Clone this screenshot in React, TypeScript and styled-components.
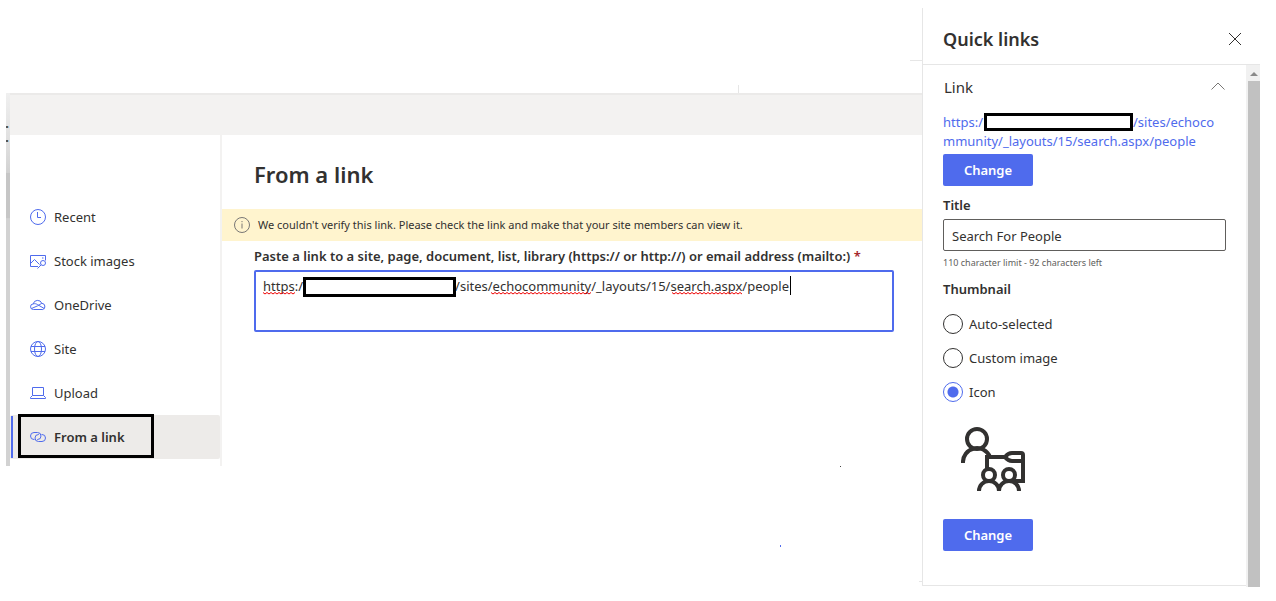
import React, { useState } from "react";
import styled, { createGlobalStyle } from "styled-components";

const blue = "#4f6bed";
const ink = "#323130";

const Global = createGlobalStyle`
  *, *::before, *::after { box-sizing: border-box; }
  body { margin: 0; background: #fff; color: ${ink}; font-family: "Noto Sans", "Open Sans", sans-serif; font-size: 13px; line-height: 20px; }
  button, input, textarea { font: inherit; color: inherit; }
  h1, h2, h3, p, ul, fieldset { margin: 0; padding: 0; border: 0; list-style: none; }
`;

const Page = styled.div`
  display: flex;
  align-items: flex-start;
  padding: 8px 16px 14px 6px;
`;

const Stage = styled.div`
  position: relative;
  flex: 1;
  min-width: 0;
  align-self: stretch;
  padding-top: 85px;
`;

const Tick = styled.i<{ $w: number; $h: number; $top: number; $right: number; $color?: string }>`
  position: absolute;
  width: ${(p) => p.$w}px;
  height: ${(p) => p.$h}px;
  top: ${(p) => p.$top}px;
  right: ${(p) => p.$right}px;
  background: ${(p) => p.$color ?? "#e6e6e6"};
`;

const Fragment = styled.i<{ $top: number }>`
  position: absolute;
  left: 0;
  top: ${(p) => p.$top}px;
  width: 3px;
  height: 2px;
  background: linear-gradient(90deg, #555 0 2px, #9cc8e4 2px);
`;

const Picker = styled.main`
  border-left: 4px solid #d2d2d2;
  border-image: linear-gradient(#f0f0f0 0, #dcdcdc 60px, #d2d2d2 80px, #c6c6c6 81px, #c6c6c6 125px, #d2d2d2 126px) 1;
  border-image-width: 0 0 0 4px;
`;

const TopBand = styled.div`
  height: 42px;
  background: #f3f2f1;
  border-top: 2px solid #ebeae9;
`;

const PickerBody = styled.div`
  display: flex;
  min-height: 331px;
`;

const Nav = styled.nav`
  width: 212px;
  flex: none;
  padding-top: 60px;
  border-right: 2px solid #f3f2f1;
`;

const NavItem = styled.button<{ $active?: boolean }>`
  position: relative;
  display: flex;
  align-items: center;
  gap: 8px;
  width: 100%;
  height: 44px;
  padding: 0 20px;
  border: 0;
  border-radius: 2px;
  background: ${(p) => (p.$active ? "#edebe9" : "transparent")};
  font-weight: ${(p) => (p.$active ? 600 : 400)};
  text-align: left;
  svg { flex: none; color: ${blue}; }
  &::before {
    content: "";
    display: ${(p) => (p.$active ? "block" : "none")};
    position: absolute;
    left: 1px;
    top: 1px;
    bottom: 1px;
    width: 2px;
    background: ${blue};
  }
  &::after {
    content: "";
    display: ${(p) => (p.$active ? "block" : "none")};
    position: absolute;
    left: 8px;
    top: -1px;
    width: 136px;
    height: 44px;
    border: 3px solid #000;
  }
`;

const Content = styled.section`
  flex: 1;
  min-width: 0;
`;

const Heading = styled.h1`
  padding: 23px 32px 19px;
  font-size: 22px;
  line-height: 32px;
  font-weight: 600;
`;

const Warning = styled.p`
  display: flex;
  align-items: center;
  gap: 8px;
  height: 32px;
  padding: 0 12px;
  background: #fff4ce;
  font-size: 11px;
  svg { flex: none; color: #797775; }
`;

const LinkForm = styled.div`
  padding: 5px 28px 0 32px;
`;

const Label = styled.label`
  display: block;
  font-weight: 600;
`;

const Required = styled.span`
  color: #a4262c;
`;

const LinkBox = styled.div`
  position: relative;
  margin-top: 4px;
`;

const LinkInput = styled.textarea`
  display: block;
  width: 100%;
  height: 62px;
  padding: 4px 7px;
  border: 2px solid ${blue};
  border-radius: 2px;
  background: #fff;
  outline: 0;
  resize: none;
`;

const Redaction = styled.span<{ $left: number; $top: number; $w: number; $h: number }>`
  position: absolute;
  left: ${(p) => p.$left}px;
  top: ${(p) => p.$top}px;
  width: ${(p) => p.$w}px;
  height: ${(p) => p.$h}px;
  border: 3px solid #000;
  background: #fff;
`;

const Squiggle = styled.svg<{ $left: number }>`
  position: absolute;
  left: ${(p) => p.$left}px;
  top: 22px;
`;

const Caret = styled.span`
  position: absolute;
  left: 536px;
  top: 6px;
  width: 1px;
  height: 19px;
  background: #000;
`;

const Panel = styled.aside`
  width: 338px;
  flex: none;
  border-left: 1px solid #e6e6e6;
`;

const PanelHeader = styled.header`
  display: flex;
  align-items: center;
  justify-content: space-between;
  height: 57px;
  padding: 6px 12px 0 20px;
  border-bottom: 1px solid #e6e6e6;
`;

const PanelTitle = styled.h2`
  font-size: 18px;
  line-height: 28px;
  font-weight: 600;
`;

const IconButton = styled.button`
  display: grid;
  place-items: center;
  width: 26px;
  height: 26px;
  padding: 0;
  border: 0;
  background: transparent;
  svg { display: block; }
`;

const PanelScroll = styled.div`
  display: flex;
`;

const PanelBody = styled.div`
  flex: 1;
  min-width: 0;
  padding: 8px 20px 34px;
  border-bottom: 1px solid #e6e6e6;
`;

const ScrollTrack = styled.div`
  width: 14px;
  flex: none;
  display: flex;
  flex-direction: column;
  align-items: flex-end;
  background: #f1f1f1;
  margin-bottom: -1px;
`;

const ScrollArrow = styled.svg`
  flex: none;
  width: 12px;
  height: 16px;
`;

const ScrollThumb = styled.div`
  flex: 1;
  width: 12px;
  background: #c1c1c1;
`;

const GroupToggle = styled.button`
  display: flex;
  align-items: center;
  justify-content: space-between;
  width: 100%;
  height: 28px;
  padding: 0 1px;
  border: 0;
  background: transparent;
  font-size: 15px;
  margin-bottom: 12px;
`;

const PanelLink = styled.a`
  position: relative;
  display: block;
  margin-bottom: 3px;
  color: ${blue};
  line-height: 19px;
  text-decoration: none;
  white-space: nowrap;
`;

const HostGap = styled.span`
  display: inline-block;
  width: 150px;
`;

const PrimaryButton = styled.button`
  display: block;
  width: 90px;
  height: 32px;
  padding: 0;
  border: 0;
  border-radius: 2px;
  background: ${blue};
  color: #fff;
  font-weight: 600;
`;

const TitleField = styled.div`
  padding-top: 9px;
`;

const TextInput = styled.input`
  display: block;
  width: 100%;
  height: 32px;
  margin-top: 4px;
  padding: 2px 8px 0;
  border: 1px solid #605e5c;
  border-radius: 2px;
  background: #fff;
`;

const Hint = styled.p`
  padding-top: 4px;
  font-size: 9px;
  line-height: 16px;
  color: #605e5c;
`;

const Choices = styled.fieldset`
  min-width: 0;
  padding-top: 8px;
`;

const Legend = styled.legend`
  float: left;
  width: 100%;
  padding: 0;
  margin-bottom: 8px;
  font-weight: 600;
`;

const Choice = styled.label`
  clear: both;
  display: flex;
  align-items: center;
  gap: 6px;
  height: 34px;
`;

const Radio = styled.input`
  appearance: none;
  width: 20px;
  height: 20px;
  margin: 0;
  border: 1px solid ${ink};
  border-radius: 50%;
  background: #fff;
  &:checked {
    border-color: ${blue};
    background: radial-gradient(circle, ${blue} 5px, #fff 6px);
  }
`;

const Thumbnail = styled.div`
  padding: 18px 18px 28px;
  svg { display: block; }
`;

const navIcons: Record<string, React.ReactNode> = {
  Recent: (
    <>
      <circle cx="8" cy="8" r="7.5" />
      <path d="M7.5 3v5.5H11" />
    </>
  ),
  "Stock images": (
    <>
      <path d="M8 13.5H.5v-11h15v5M.5 10.5l4-4 5 5M12 5h1.500" />
      <circle cx="13" cy="10" r="2.5" />
      <path d="M11.200 11.800 7.500 15.500" />
    </>
  ),
  OneDrive: (
    <>
      <path d="M3.5 12.5a2.800 2.800 0 0 1-.3-5.600 4.500 4.500 0 0 1 8.600-.6 3.200 3.200 0 0 1 1 6.200z" />
      <path d="M3.200 6.900c2-.6 3.200 0 4.500.8l6.800 4M1.500 11.500l6.200-2.700 4.100-2.500" />
    </>
  ),
  Site: (
    <>
      <circle cx="8" cy="8" r="7.5" />
      <ellipse cx="8" cy="8" rx="3.500" ry="7.500" />
      <path d="M1 5.500h14M1 10.500h14" />
    </>
  ),
  Upload: <path d="M2.500 10.500v-8h11v8M2.500 10.500l-2 2v1h15v-1l-2-2z" />,
  "From a link": (
    <>
      <path d="M4.500 10.500H4a3.500 3.500 0 0 1 0-7h3.500a3.500 3.500 0 0 1 0 7H7" />
      <path d="M11.500 5.500h.5a3.500 3.500 0 0 1 0 7H8.500a3.500 3.500 0 0 1 0-7H9" />
    </>
  ),
};

const NavIcon = ({ name }: { name: string }) => (
  <svg width="16" height="16" viewBox="0 0 16 16" fill="none" stroke="currentColor" aria-hidden="true">
    {navIcons[name]}
  </svg>
);

const Misspelling = ({ left, width }: { left: number; width: number }) => {
  let d = "M0 .5";
  for (let x = 2; x <= width; x += 2) d += `L${x} ${x % 4 ? 2 : 0.5}`;
  return (
    <Squiggle $left={left} width={width} height={3} fill="none" stroke="#e00" aria-hidden="true">
      <path d={d} />
    </Squiggle>
  );
};

const choices = ["Auto-selected", "Custom image", "Icon"];

export default function App() {
  const [source, setSource] = useState("From a link");
  const [thumb, setThumb] = useState("Icon");
  const [open, setOpen] = useState(true);

  return (
    <>
      <Global />
      <Page>
        <Stage>
          <Tick $w={12} $h={1} $top={52} $right={0} />
          <Tick $w={1} $h={8} $top={77} $right={183} />
          <Tick $w={3} $h={1} $top={573} $right={0} />
          <Tick $w={1} $h={1} $top={458} $right={81} $color="#444" />
          <Tick $w={1} $h={2} $top={537} $right={141} $color={blue} />
          <Fragment $top={118} />
          <Fragment $top={132} />
          <Picker>
            <TopBand />
            <PickerBody>
              <Nav aria-label="Link source">
                {Object.keys(navIcons).map((name) => (
                  <NavItem key={name} $active={name === source} onClick={() => setSource(name)}>
                    <NavIcon name={name} />
                    {name}
                  </NavItem>
                ))}
              </Nav>
              <Content>
                <Heading>From a link</Heading>
                <Warning>
                  <svg width="16" height="16" viewBox="0 0 16 16" fill="none" stroke="currentColor" aria-hidden="true">
                    <circle cx="8" cy="8" r="7.5" />
                    <path d="M8 6.500v5M8 4v1.200" />
                  </svg>
                  We couldn't verify this link. Please check the link and make that your site members can view it.
                </Warning>
                <LinkForm>
                  <Label htmlFor="link-url">
                    Paste a link to a site, page, document, list, library (https:// or http://) or email address (mailto:){" "}
                    <Required>*</Required>
                  </Label>
                  <LinkBox>
                    <LinkInput
                      id="link-url"
                      spellCheck={false}
                      defaultValue={"https:/" + "\u00a0".repeat(45) + "/sites/echocommunity/_layouts/15/search.aspx/people"}
                    />
                    <Misspelling left={9} width={32} />
                    <Misspelling left={237} width={100} />
                    <Misspelling left={418} width={71} />
                    <Redaction $left={49} $top={7} $w={153} $h={20} />
                    <Caret />
                  </LinkBox>
                </LinkForm>
              </Content>
            </PickerBody>
          </Picker>
        </Stage>

        <Panel>
          <PanelHeader>
            <PanelTitle>Quick links</PanelTitle>
            <IconButton aria-label="Close">
              <svg width="12" height="12" viewBox="0 0 12 12" stroke={ink} fill="none">
                <path d="M0 0l12 12M12 0L0 12" />
              </svg>
            </IconButton>
          </PanelHeader>
          <PanelScroll>
            <PanelBody>
              <GroupToggle aria-expanded={open} onClick={() => setOpen(!open)}>
                Link
                <svg width="14" height="10" viewBox="0 0 14 10" stroke="#797775" fill="none" aria-hidden="true">
                  <path d="M.5 7.500 7 1l6.500 6.500" />
                </svg>
              </GroupToggle>
              <PanelLink href="#link">
                https:/
                <HostGap />
                /sites/echoco
                <br />
                mmunity/_layouts/15/search.aspx/people
                <Redaction $left={41} $top={0} $w={149} $h={18} />
              </PanelLink>
              <PrimaryButton>Change</PrimaryButton>
              <TitleField>
                <Label htmlFor="link-title">Title</Label>
                <TextInput id="link-title" defaultValue="Search For People" />
                <Hint>110 character limit - 92 characters left</Hint>
              </TitleField>
              <Choices>
                <Legend>Thumbnail</Legend>
                {choices.map((c) => (
                  <Choice key={c}>
                    <Radio type="radio" name="thumbnail" checked={thumb === c} onChange={() => setThumb(c)} />
                    {c}
                  </Choice>
                ))}
              </Choices>
              <Thumbnail>
                <svg width="64" height="64" viewBox="0 0 64 64" fill="none" stroke={ink} strokeWidth="4" aria-hidden="true">
                  <circle cx="16" cy="12" r="10" />
                  <path d="M2 36a14 14 0 0 1 27-6" />
                  <path d="M26 42V30h18q3-4 7-4h9q2 0 2 2v26H53" />
                  <path d="M44 30q3 4 7 4h11" />
                  <circle cx="28" cy="48" r="6" />
                  <circle cx="48" cy="48" r="6" />
                  <path d="M18 64a10 10 0 0 1 20 0a10 10 0 0 1 20 0" />
                </svg>
              </Thumbnail>
              <PrimaryButton>Change</PrimaryButton>
            </PanelBody>
            <ScrollTrack aria-hidden="true">
              <ScrollArrow viewBox="0 0 12 16">
                <path d="M2 11l4-4 4 4z" fill="#8a8a8a" />
              </ScrollArrow>
              <ScrollThumb />
            </ScrollTrack>
          </PanelScroll>
        </Panel>
      </Page>
    </>
  );
}
